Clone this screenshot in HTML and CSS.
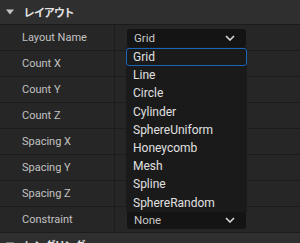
FILE: index.html
```html
<!DOCTYPE html>
<html lang="ja">
<head>
<meta charset="utf-8">
<link rel="stylesheet" href="styles.css">
</head>
<body>
<div class="panel">
  <div class="section-header">
    <svg class="caret" width="8" height="6" viewBox="0 0 8 6"><path d="M0 0.5 L8 0.5 L4 5.5 Z" fill="#c4c4c4"/></svg>
    <span class="section-title">レイアウト</span>
  </div>
  <div class="rows">
    <div class="row">
      <div class="label">Layout Name</div>
      <div class="value">
        <div class="combo">
          <span>Grid</span>
          <svg class="chev" width="10" height="6" viewBox="0 0 10 6"><path d="M1 1 L5 5 L9 1" fill="none" stroke="#d8d8d8" stroke-width="1.6"/></svg>
        </div>
      </div>
    </div>
    <div class="row"><div class="label">Count X</div><div class="value"></div></div>
    <div class="row"><div class="label">Count Y</div><div class="value"></div></div>
    <div class="row"><div class="label">Count Z</div><div class="value"></div></div>
    <div class="row"><div class="label">Spacing X</div><div class="value"></div></div>
    <div class="row"><div class="label">Spacing Y</div><div class="value"></div></div>
    <div class="row"><div class="label">Spacing Z</div><div class="value"></div></div>
    <div class="row">
      <div class="label">Constraint</div>
      <div class="value">
        <div class="combo">
          <span>None</span>
          <svg class="chev" width="10" height="6" viewBox="0 0 10 6"><path d="M1 1 L5 5 L9 1" fill="none" stroke="#d8d8d8" stroke-width="1.6"/></svg>
        </div>
      </div>
    </div>
  </div>
  <div class="section-header">
    <svg class="caret" width="8" height="6" viewBox="0 0 8 6"><path d="M0 0.5 L8 0.5 L4 5.5 Z" fill="#c4c4c4"/></svg>
    <span class="section-title">レンダリング</span>
  </div>
  <ul class="popup">
    <li class="item selected">Grid</li>
    <li class="item">Line</li>
    <li class="item">Circle</li>
    <li class="item">Cylinder</li>
    <li class="item">SphereUniform</li>
    <li class="item">Honeycomb</li>
    <li class="item">Mesh</li>
    <li class="item">Spline</li>
    <li class="item">SphereRandom</li>
  </ul>
</div>
</body>
</html>
```
FILE: styles.css
```css
html, body {
  margin: 0;
  padding: 0;
  background: #242424;
  overflow: hidden;
}
.panel {
  position: relative;
  width: 300px;
  height: 243px;
  overflow: hidden;
  font-family: Roboto, "Noto Sans CJK JP", sans-serif;
  font-size: 11px;
  color: #c2c2c2;
}
.section-header {
  height: 24px;
  border-bottom: 1px solid #1b1b1b;
  background: #2f2f2f;
  display: flex;
  align-items: center;
  padding-left: 6px;
  gap: 10px;
}
.section-title {
  font-weight: bold;
  font-size: 11px;
  color: #e2e2e2;
  font-family: "Noto Sans CJK JP", sans-serif;
  font-feature-settings: "palt";
}
.rows {
  display: flex;
  flex-direction: column;
}
.row {
  height: 25px;
  border-bottom: 1px solid #1c1c1c;
  display: grid;
  grid-template-columns: 114px 1px 1fr;
  background: #262626;
}
.row::before {
  content: "";
  grid-column: 2;
  grid-row: 1;
  background: #1c1c1c;
}
.label {
  grid-column: 1;
  grid-row: 1;
  display: flex;
  align-items: center;
  padding-left: 22px;
}
.value {
  grid-column: 3;
  grid-row: 1;
  display: flex;
  align-items: center;
  padding-left: 12px;
}
.combo {
  width: 119px;
  height: 18px;
  box-sizing: border-box;
  background: #141414;
  border-radius: 3px;
  display: flex;
  align-items: center;
  justify-content: space-between;
  padding: 0 11px 0 7px;
  color: #c8c8c8;
  font-size: 11.5px;
}
.popup {
  position: absolute;
  left: 126px;
  top: 47px;
  width: 121px;
  height: 165px;
  margin: 0;
  padding: 1px 0 0;
  list-style: none;
  background: #1a1a1a;
  box-sizing: border-box;
  display: flex;
  flex-direction: column;
}
.item {
  height: 18.2px;
  display: flex;
  align-items: center;
  padding-left: 7px;
  color: #e0e0e0;
  font-size: 12px;
  box-sizing: border-box;
}
.item.selected {
  border: 1.5px solid #1c64b8;
  border-radius: 3px;
  padding-left: 6px;
}
```
